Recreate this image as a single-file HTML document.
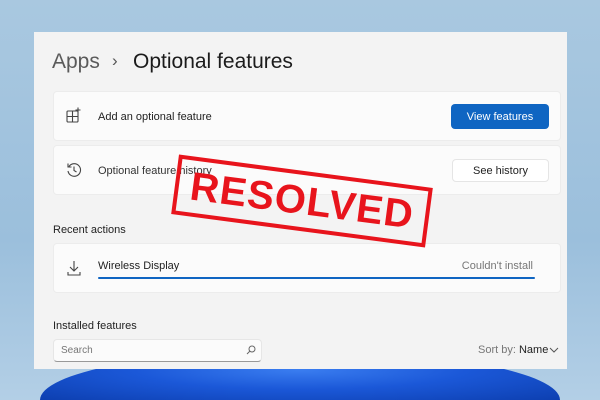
<!DOCTYPE html>
<html style="width:600px;height:400px;overflow:hidden;margin:0"><head><style>
body{margin:0;width:600px;height:400px;overflow:hidden;font-family:"Liberation Sans",sans-serif;position:relative;background:linear-gradient(180deg,#a9c8e0 0%,#9bbfdc 60%,#b3cfe6 100%);}
.bloom{position:absolute;left:40px;top:350px;width:520px;height:50px;border-radius:50% 50% 0 0 / 100% 100% 0 0;background:radial-gradient(ellipse at 50% 40%,#3a7df0 0%,#1b58d8 45%,#0d3fb0 100%);}
.panel{position:absolute;left:34px;top:32px;width:533px;height:337px;background:#f3f3f3;}
.t{position:absolute;white-space:nowrap;}
.card{position:absolute;left:19px;width:508px;background:#fbfbfb;border-radius:4px;border:1px solid #ececec;box-sizing:border-box;}
.btn{position:absolute;border-radius:4px;font-size:11px;text-align:center;box-sizing:border-box;}
.stamp{position:absolute;left:174px;top:171px;width:256px;height:60px;border:4px solid #e8141c;box-sizing:border-box;transform:rotate(7.5deg);color:#e8141c;font-weight:bold;font-size:40px;line-height:52px;text-align:center;letter-spacing:1px;font-family:"Liberation Sans",sans-serif;overflow:hidden;}
</style></head><body>
<div class="bloom"></div>
<div class="panel">
<div class="t" style="left:18px;top:18px;font-size:21px;color:#5a5a5a;">Apps</div>
<div class="t" style="left:78px;top:19px;font-size:17px;color:#555;">›</div>
<div class="t" style="left:99px;top:18px;font-size:21px;color:#1b1b1b;">Optional features</div>

<div class="card" style="top:59px;height:50px;">
<svg class="t" style="left:12px;top:15px" width="16" height="16" viewBox="0 0 16 16" fill="none" stroke="#444" stroke-width="1.1"><rect x="1" y="4" width="11" height="11" rx="1"/><path d="M6.5 4v11M1 9.5h11M12 0.5v5M9.5 3h5"/></svg>
<div class="t" style="left:44px;top:19px;font-size:11px;color:#222;">Add an optional feature</div>
<div class="btn" style="left:397px;top:12px;width:98px;height:25px;background:#0f65c2;color:#fff;line-height:27px;">View features</div>
</div>

<div class="card" style="top:113px;height:50px;">
<svg class="t" style="left:12px;top:16px" width="16" height="16" viewBox="0 0 16 16" fill="none" stroke="#444" stroke-width="1.1"><path d="M3 4.5A6.3 6.3 0 1 1 2 9"/><path d="M2 1.5v3.5h3.5"/><path d="M8 4.5v4l2.5 1.5"/></svg>
<div class="t" style="left:44px;top:19px;font-size:11px;color:#333;">Optional feature history</div>
<div class="btn" style="left:398px;top:13px;width:97px;height:23px;background:#fff;border:1px solid #e5e5e5;color:#222;line-height:23px;">See history</div>
</div>

<div class="t" style="left:19px;top:192px;font-size:11px;color:#222;">Recent actions</div>
<div class="card" style="top:211px;height:50px;">
<svg class="t" style="left:12px;top:16px" width="16" height="16" viewBox="0 0 16 16" fill="none" stroke="#444" stroke-width="1.1"><path d="M8 1v10M4 7l4 4 4-4M2 12v3h12v-3"/></svg>
<div class="t" style="left:44px;top:16px;font-size:11px;color:#222;">Wireless Display</div>
<div class="t" style="right:27px;top:16px;font-size:11px;color:#777;">Couldn't install</div>
<div class="t" style="left:44px;top:33px;width:437px;height:2px;background:#0f65c2;border-radius:1px;"></div>
</div>

<div class="t" style="left:19px;top:288px;font-size:11px;color:#222;">Installed features</div>
<div class="t" style="left:19px;top:307px;width:209px;height:23px;background:#fbfbfb;border:1px solid #e6e6e6;border-bottom-color:#999;border-radius:4px;box-sizing:border-box;"></div>
<div class="t" style="left:27px;top:313px;font-size:10px;color:#777;">Search</div>
<svg class="t" style="left:212px;top:313px" width="10" height="10" viewBox="0 0 10 10" fill="none" stroke="#666" stroke-width="1"><circle cx="6" cy="4" r="3"/><path d="M4 6L1 9"/></svg>
<div class="t" style="left:444px;top:312px;font-size:11px;color:#777;">Sort by: <span style="color:#222">Name</span></div>
<svg class="t" style="left:515px;top:315px" width="10" height="7" viewBox="0 0 10 7" fill="none" stroke="#555" stroke-width="1"><path d="M1 1l4 4 4-4"/></svg>
</div>
<div class="stamp">RESOLVED</div>
</body></html>
